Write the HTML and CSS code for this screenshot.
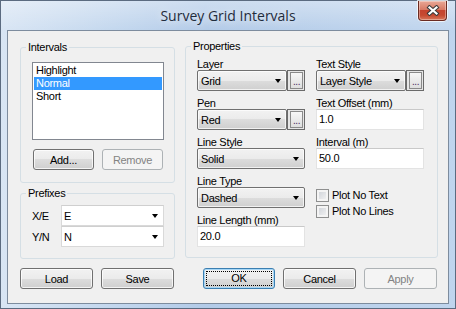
FILE: index.html
```html
<!DOCTYPE html>
<html lang="en">
<head>
  <meta charset="UTF-8">
  <title>Survey Grid Intervals</title>
  <link rel="stylesheet" href="styles.css">
</head>
<body>
  <div class="window">
    <div class="titlebar">
      <span class="title">Survey Grid Intervals</span>
      <button class="close" type="button">
        <svg width="14" height="11" viewBox="0 0 14 11">
          <path d="M3.5 2.5 L10.5 8.5 M10.5 2.5 L3.5 8.5" stroke="#3a3a3a" stroke-width="4.2" stroke-linecap="square"/>
          <path d="M3.5 2.5 L10.5 8.5 M10.5 2.5 L3.5 8.5" stroke="#fff" stroke-width="2.2" stroke-linecap="square"/>
        </svg>
      </button>
    </div>

    <div class="client">
      <div class="main">
        <div class="left">
          <div class="group intervals">
            <span class="group-title">Intervals</span>
            <ul class="listbox">
              <li>Highlight</li>
              <li class="selected">Normal</li>
              <li>Short</li>
            </ul>
            <div class="btn-row">
              <button class="btn small" type="button">Add...</button>
              <button class="btn small" type="button" disabled>Remove</button>
            </div>
          </div>

          <div class="group prefixes">
            <span class="group-title">Prefixes</span>
            <div class="prefix-row">
              <label>X/E</label>
              <div class="combo-edit">E<span class="arrow"></span></div>
            </div>
            <div class="prefix-row">
              <label>Y/N</label>
              <div class="combo-edit">N<span class="arrow"></span></div>
            </div>
          </div>
        </div>

        <div class="group properties">
          <span class="group-title">Properties</span>
          <div class="prop-grid">
            <div class="col">
              <div class="field">
                <label>Layer</label>
                <div class="pick">
                  <div class="combo">Grid<span class="arrow"></span></div>
                  <div class="dots"><span>...</span></div>
                </div>
              </div>
              <div class="field">
                <label>Pen</label>
                <div class="pick">
                  <div class="combo">Red<span class="arrow"></span></div>
                  <div class="dots"><span>...</span></div>
                </div>
              </div>
              <div class="field">
                <label>Line Style</label>
                <div class="combo">Solid<span class="arrow"></span></div>
              </div>
              <div class="field">
                <label>Line Type</label>
                <div class="combo">Dashed<span class="arrow"></span></div>
              </div>
              <div class="field">
                <label>Line Length (mm)</label>
                <div class="textbox">20.0</div>
              </div>
            </div>

            <div class="col">
              <div class="field">
                <label>Text Style</label>
                <div class="pick">
                  <div class="combo">Layer Style<span class="arrow"></span></div>
                  <div class="dots"><span>...</span></div>
                </div>
              </div>
              <div class="field">
                <label>Text Offset (mm)</label>
                <div class="textbox">1.0</div>
              </div>
              <div class="field">
                <label>Interval (m)</label>
                <div class="textbox">50.0</div>
              </div>
              <div class="checks">
                <div class="check"><span class="box"></span>Plot No Text</div>
                <div class="check"><span class="box"></span>Plot No Lines</div>
              </div>
            </div>
          </div>
        </div>
      </div>

      <div class="bottom">
        <div class="left-btns">
          <button class="btn" type="button">Load</button>
          <button class="btn" type="button">Save</button>
        </div>
        <div class="right-btns">
          <button class="btn default" type="button"><span>OK</span></button>
          <button class="btn" type="button">Cancel</button>
          <button class="btn" type="button" disabled>Apply</button>
        </div>
      </div>
    </div>
  </div>
</body>
</html>
```

FILE: styles.css
```css
* {
  box-sizing: border-box;
}
body {
  margin: 0;
  font: 11px "Liberation Sans", Arial, sans-serif;
  letter-spacing: -0.3px;
  color: #000;
}

/* window frame */
.window {
  width: 456px;
  height: 309px;
  border: 1px solid #5b6b80;
  padding: 0 6px 4px;
  display: flex;
  flex-direction: column;
  background:
    linear-gradient(to bottom, rgba(255,255,255,.35), rgba(255,255,255,0) 30px),
    linear-gradient(to right, #d8e5f4 0, #c3d7ee 25%, #b3cbe8 45%, #b8cfea 65%, #c0d5ee 100%);
}
.titlebar {
  height: 29px;
  position: relative;
  display: flex;
  justify-content: center;
  align-items: flex-start;
}
.title {
  font: 14px "Open Sans", sans-serif;
  letter-spacing: 0;
  line-height: 19px;
  padding-top: 5px;
  color: #1f2c3c;
  text-shadow: 0 0 8px rgba(255,255,255,.9);
}
.close {
  position: absolute;
  top: 0;
  right: 2px;
  width: 29px;
  height: 20px;
  padding: 0;
  border: 1px solid #6b2b22;
  border-top: none;
  border-radius: 0 0 4px 4px;
  background: linear-gradient(#e9a896 0, #d77a65 45%, #c5432e 50%, #c64a31 75%, #d8775b 100%);
  box-shadow: inset 0 0 0 1px rgba(255,255,255,.35), 0 0 0 1px rgba(255,255,255,.7);
  display: flex;
  align-items: center;
  justify-content: center;
}
.close svg {
  display: block;
}

/* client area */
.client {
  height: 274px;
  border: 1px solid #7d8c9e;
  background: #f0f0f0;
  padding: 15px 10px 0 12px;
}
.main {
  display: grid;
  grid-template-columns: 155px 253px;
  column-gap: 10px;
}
.left {
  padding-top: 1px;
  display: flex;
  flex-direction: column;
  gap: 10px;
}
.group {
  position: relative;
  border: 1px solid #d5dfe5;
  border-radius: 3px;
}
.group-title {
  position: absolute;
  top: -7px;
  left: 5px;
  padding: 0 2px;
  line-height: 13px;
  background: #f0f0f0;
}

.intervals {
  height: 136px;
  padding: 14px 0 0 11px;
}
.listbox {
  width: 132px;
  height: 78px;
  margin: 0;
  padding: 1px;
  list-style: none;
  border: 1px solid #828790;
  background: #fff;
}
.listbox li {
  height: 13px;
  line-height: 13px;
  padding-left: 2px;
}
.listbox li.selected {
  background: #3399ff;
  color: #fff;
}
.btn-row {
  display: flex;
  gap: 8px;
  margin: 9px 0 0 1px;
}

.prefixes {
  height: 66px;
  padding: 11px 0 0 11px;
}
.prefix-row {
  display: flex;
  align-items: center;
}
.prefix-row label {
  width: 29px;
}
.combo-edit {
  width: 103px;
  height: 21px;
  border: 1px solid #d9d9d9;
  border-top-color: #cfcfcf;
  background: #fff;
  display: flex;
  align-items: center;
  padding: 0 5px 0 2px;
}

.arrow {
  margin-left: auto;
  width: 0;
  height: 0;
  border-left: 3.5px solid transparent;
  border-right: 3.5px solid transparent;
  border-top: 4px solid #000;
}

/* properties */
.properties {
  height: 212px;
  padding: 11px 0 0 11px;
}
.prop-grid {
  display: grid;
  grid-template-columns: 108px 108px;
  column-gap: 11px;
}
.col {
  display: flex;
  flex-direction: column;
  gap: 6px;
}
.field label {
  display: block;
  line-height: 12px;
}
.pick {
  display: flex;
}
.combo {
  flex: 1;
  height: 21px;
  border: 1px solid #707070;
  border-radius: 2px;
  background: linear-gradient(#f2f2f2 0, #ebebeb 50%, #dddddd 50%, #cfcfcf 100%);
  box-shadow: inset 0 0 0 1px rgba(255,255,255,.7);
  display: flex;
  align-items: center;
  padding: 0 5px 0 3px;
}
.dots {
  width: 18px;
  height: 21px;
  border: 1px solid #6a6a6a;
  padding: 1px 1px 1px 2px;
  background: #e6e6e6;
}
.dots span {
  display: block;
  height: 100%;
  border: 1px solid #8a8a8a;
  background: linear-gradient(#f7f7f7, #dedede);
  font-size: 10px;
  line-height: 11px;
  padding-top: 3px;
  text-align: center;
  color: #4d2a5c;
  letter-spacing: -0.5px;
}
.textbox {
  height: 21px;
  border: 1px solid #e3e3e3;
  border-top-color: #c9c9c9;
  background: #fff;
  line-height: 19px;
  padding-left: 2px;
}
.checks {
  margin-top: 12px;
}
.check {
  display: flex;
  align-items: center;
  height: 16px;
}
.check .box {
  width: 13px;
  height: 13px;
  margin-right: 3px;
  border: 1px solid #8e8f8f;
  background: linear-gradient(135deg, #cbcfd5, #f6f6f6);
  box-shadow: inset 0 0 0 2px #f4f4f4;
}

/* push buttons */
.btn {
  width: 73px;
  height: 21px;
  padding: 0;
  font: inherit;
  letter-spacing: inherit;
  color: #000;
  border: 1px solid #707070;
  border-radius: 3px;
  background: linear-gradient(#f2f2f2 0, #ebebeb 50%, #dddddd 50%, #cfcfcf 100%);
  box-shadow: inset 0 0 0 1px rgba(255,255,255,.75);
}
.btn.small {
  width: 61px;
}
.btn:disabled {
  color: #838383;
  border-color: #adb2b5;
  background: #f4f4f4;
  box-shadow: none;
}
.btn.default {
  width: 72px;
  border-color: #3c7fb1;
  box-shadow: inset 0 0 0 1px #a6d7f7;
  padding: 2px;
}
.btn.default span {
  display: block;
  height: 100%;
  border: 1px dotted #000;
  line-height: 13px;
}
.bottom {
  display: grid;
  grid-template-columns: 155px 253px;
  column-gap: 10px;
  margin-top: 9px;
}
.left-btns,
.right-btns {
  display: flex;
  gap: 8px;
}
.right-btns {
  justify-content: flex-end;
  padding-right: 1px;
}
```
